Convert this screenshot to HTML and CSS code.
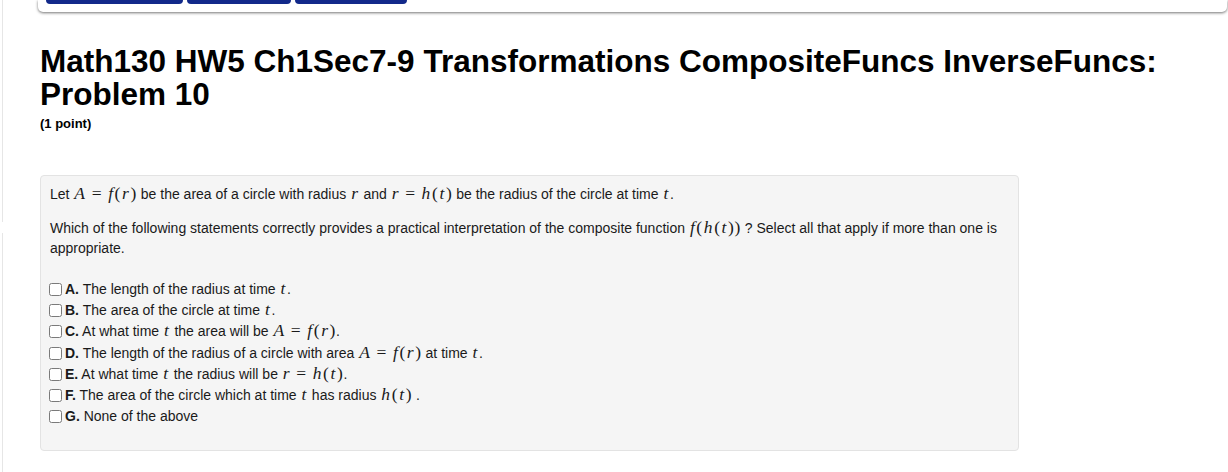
FILE: index.html
```html
<!DOCTYPE html>
<html lang="en">
<head>
<meta charset="utf-8">
<title>Math130 HW5 Problem 10</title>
<link rel="stylesheet" href="styles.css">
</head>
<body>
<div class="page">
  <div class="rail">
    <div class="rail-seg rail-top"></div>
    <div class="rail-seg rail-bottom"></div>
  </div>
  <main class="main">
    <div class="navcard">
      <span class="navbtn b1"></span>
      <span class="navbtn b2"></span>
      <span class="navbtn b3"></span>
    </div>
    <h1 class="title">Math130 HW5 Ch1Sec7-9 Transformations CompositeFuncs InverseFuncs: Problem 10</h1>
    <div class="points">(1 point)</div>
    <div class="problem">
      <p class="intro">Let <span class="m"><i>A</i><span class="eq">=</span><i>f</i>(<i>r</i>)</span> be the area of a circle with radius <span class="m"><i>r</i></span> and <span class="m"><i>r</i><span class="eq">=</span><i>h</i>(<i>t</i>)</span> be the radius of the circle at time <span class="m"><i>t</i></span>.</p>
      <p class="question">Which of the following statements correctly provides a practical interpretation of the composite function <span class="m"><i>f</i>(<i>h</i>(<i>t</i>))</span> ? Select all that apply if more than one is appropriate.</p>
      <ul class="options">
        <li class="opt"><span class="cb"></span><b>A.</b> The length of the radius at time <span class="m"><i>t</i></span>.</li>
        <li class="opt"><span class="cb"></span><b>B.</b> The area of the circle at time <span class="m"><i>t</i></span>.</li>
        <li class="opt"><span class="cb"></span><b>C.</b> At what time <span class="m"><i>t</i></span> the area will be <span class="m"><i>A</i><span class="eq">=</span><i>f</i>(<i>r</i>)</span>.</li>
        <li class="opt"><span class="cb"></span><b>D.</b> The length of the radius of a circle with area <span class="m"><i>A</i><span class="eq">=</span><i>f</i>(<i>r</i>)</span> at time <span class="m"><i>t</i></span>.</li>
        <li class="opt"><span class="cb"></span><b>E.</b> At what time <span class="m"><i>t</i></span> the radius will be <span class="m"><i>r</i><span class="eq">=</span><i>h</i>(<i>t</i>)</span>.</li>
        <li class="opt"><span class="cb"></span><b>F.</b> The area of the circle which at time <span class="m"><i>t</i></span> has radius <span class="m"><i>h</i>(<i>t</i>)</span> .</li>
        <li class="opt"><span class="cb"></span><b>G.</b> None of the above</li>
      </ul>
    </div>
  </main>
</div>
</body>
</html>
```
FILE: styles.css
```css
html, body {
  margin: 0;
  padding: 0;
  background: #ffffff;
}
body {
  font-family: "Liberation Sans", Arial, Helvetica, sans-serif;
  color: #1a1a1a;
  width: 1228px;
  height: 472px;
  overflow: hidden;
}
.page {
  display: flex;
  min-height: 472px;
}
.rail {
  width: 3px;
  display: flex;
  flex-direction: column;
  gap: 11px;
}
.rail-seg {
  border-right: 1px solid #e6e6e6;
}
.rail-top {
  height: 222px;
}
.rail-bottom {
  flex: 1;
}
.main {
  flex: 1;
  padding: 0 3px 0 37px;
}
.navcard {
  height: 12px;
  margin: 0 -2px 0 -2px;
  background: #fff;
  border-radius: 0 0 5px 5px;
  box-shadow: 0 1px 3px rgba(0, 0, 0, 0.55);
  display: flex;
  gap: 4px;
  padding-left: 8px;
  box-sizing: border-box;
}
.navbtn {
  display: block;
  height: 4px;
  background: #12298a;
  border-radius: 0 0 4px 4px;
}
.b1 { width: 137px; }
.b2 { width: 104px; }
.b3 { width: 112px; }
.title {
  font-size: 31.5px;
  line-height: 33px;
  font-weight: bold;
  color: #000;
  margin: 33px 0 0 0;
}
.points {
  font-size: 13px;
  font-weight: bold;
  line-height: 16px;
  color: #000;
  margin-top: 5px;
}
.problem {
  width: 979px;
  box-sizing: border-box;
  margin-top: 43px;
  background: #f5f5f5;
  border: 1px solid #e3e3e3;
  border-radius: 4px;
  padding: 8px 9px 23px 9px;
  font-size: 14px;
  line-height: 20px;
}
.problem p {
  margin: 0;
}
.intro {
  margin-bottom: 14px !important;
}
.question {
  margin-bottom: 21px !important;
}
.options {
  list-style: none;
  margin: 0;
  padding: 0;
}
.opt {
  line-height: 21.2px;
  height: 21.2px;
  white-space: nowrap;
}
.opt b {
  font-weight: bold;
}
.cb {
  display: inline-block;
  width: 11px;
  height: 11px;
  border: 1px solid #7a7a7a;
  border-radius: 2.5px;
  background: #fff;
  margin: 0 3px 0 -1px;
  vertical-align: -2px;
}
.m {
  font-family: "Liberation Serif", "Times New Roman", serif;
  font-size: 17.5px;
  line-height: 1;
  white-space: nowrap;
  letter-spacing: 0.6px;
}
.m i {
  font-style: italic;
  padding: 0 1px;
}
.eq {
  margin: 0 5px;
}
```
